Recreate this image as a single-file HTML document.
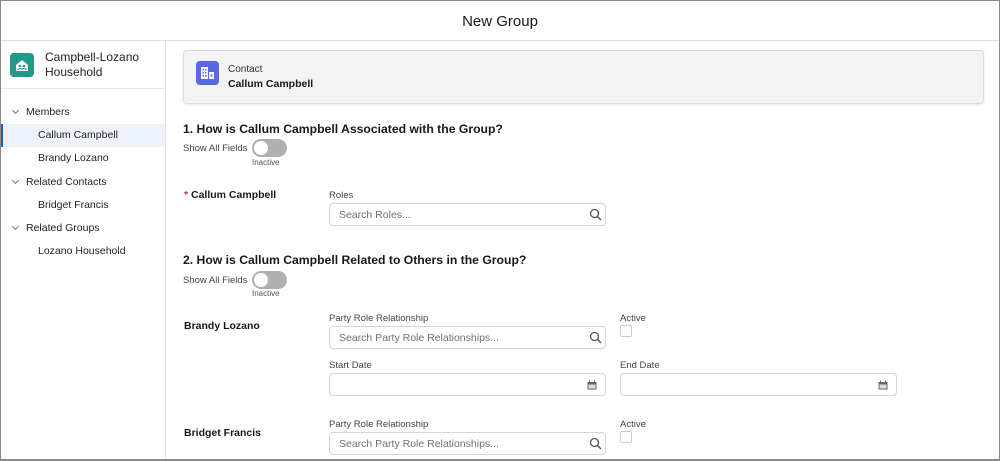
<!DOCTYPE html>
<html><head><meta charset="utf-8"><style>
*{margin:0;padding:0;box-sizing:border-box}
body{width:1000px;height:461px;overflow:hidden;background:#fff;font-family:"Liberation Sans",sans-serif;color:#181818;position:relative}
.a{position:absolute;white-space:nowrap}
.frame{position:absolute;left:0;top:0;width:1000px;height:461px;border:1px solid #8a8a8a;border-bottom:2px solid #8a8a8a;pointer-events:none}
.lbl{font-size:9.5px;color:#444}
.inp{position:absolute;height:23px;border:1px solid #d5d5d5;border-radius:4px;background:#fff;font-size:10.5px;color:#707070;padding:5px 0 0 9px}
.nav{font-size:10.5px;color:#222}
.chev{position:absolute;width:5px;height:5px;border-right:1px solid #777;border-bottom:1px solid #777;transform:rotate(45deg)}
.tog{position:absolute;width:35px;height:18px;border-radius:9px;background:#b0b0b0}
.tog::after{content:"";position:absolute;left:2px;top:2px;width:14px;height:14px;border-radius:50%;background:#fff}
.cb{position:absolute;width:12px;height:12px;border:1px solid #ccc;border-radius:2px}
.b{font-weight:bold;font-size:10.5px}
.h{font-size:12.2px;font-weight:bold}
</style></head><body>
<div class="a" style="left:0;top:13px;width:1000px;text-align:center;font-size:15px">New Group</div>
<div class="a" style="left:0;top:40px;width:1000px;height:1px;background:#ddd"></div>
<div class="a" style="left:165px;top:41px;width:1px;height:420px;background:#e3e3e3"></div>
<div class="a" style="left:10px;top:53px;width:24px;height:24px;border-radius:4px;background:#1d9a8a"></div>
<svg class="a" style="left:14px;top:57px" width="16" height="16" viewBox="0 0 16 16"><path d="M2 8L8 3l6 5v6H2z" fill="#fff"/><circle cx="6" cy="9" r="1.3" fill="#1d9a8a"/><circle cx="10" cy="9" r="1.3" fill="#1d9a8a"/><path d="M4 13c0-2 4-2 4 0M8 13c0-2 4-2 4 0" stroke="#1d9a8a" fill="none"/></svg>
<div class="a" style="left:45px;top:50px;font-size:12px;line-height:15px;color:#222">Campbell-Lozano<br>Household</div>
<div class="a" style="left:0;top:88px;width:165px;height:1px;background:#e5e5e5"></div>
<div class="chev" style="left:13px;top:108px"></div><div class="a nav" style="left:26px;top:106px">Members</div>
<div class="a" style="left:1px;top:124px;width:164px;height:23px;background:#eef3fb;border-left:2px solid #1b5cc8"></div>
<div class="a nav" style="left:38px;top:129px">Callum Campbell</div>
<div class="a nav" style="left:38px;top:152px">Brandy Lozano</div>
<div class="chev" style="left:13px;top:178px"></div><div class="a nav" style="left:26px;top:176px">Related Contacts</div>
<div class="a nav" style="left:38px;top:199px">Bridget Francis</div>
<div class="chev" style="left:13px;top:224px"></div><div class="a nav" style="left:26px;top:222px">Related Groups</div>
<div class="a nav" style="left:38px;top:245px">Lozano Household</div>

<div class="a" style="left:183px;top:50px;width:801px;height:54px;background:#f3f3f3;border:1px solid #dcdcdc;border-radius:4px;box-shadow:0 1px 2px rgba(0,0,0,.1)"></div>
<div class="a" style="left:196px;top:61px;width:23px;height:24px;border-radius:4px;background:#5a67e0"></div>
<svg class="a" style="left:199px;top:65px" width="17" height="16" viewBox="0 0 17 16"><rect x="2" y="2" width="7" height="12" fill="#fff"/><rect x="10" y="7" width="5" height="7" fill="#fff"/><g fill="#5a67e0"><rect x="3.5" y="4" width="1.5" height="1.5"/><rect x="6" y="4" width="1.5" height="1.5"/><rect x="3.5" y="7" width="1.5" height="1.5"/><rect x="6" y="7" width="1.5" height="1.5"/><rect x="3.5" y="10" width="1.5" height="1.5"/><rect x="6" y="10" width="1.5" height="1.5"/><rect x="11.5" y="9.5" width="2" height="2"/></g></svg>
<div class="a" style="left:228px;top:64px;font-size:10px;color:#333">Contact</div>
<div class="a b" style="left:228px;top:78px">Callum Campbell</div>

<div class="a h" style="left:183px;top:122px">1. How is Callum Campbell Associated with the Group?</div>
<div class="a lbl" style="left:183px;top:143px">Show All Fields</div>
<div class="tog" style="left:252px;top:139px"></div>
<div class="a" style="left:252px;top:158px;font-size:8px;color:#555">Inactive</div>
<div class="a b" style="left:184px;top:189px"><span style="color:#c23934">*</span> Callum Campbell</div>
<div class="a lbl" style="left:329px;top:190px">Roles</div>
<div class="inp" style="left:329px;top:203px;width:277px">Search Roles...</div>

<div class="a h" style="left:183px;top:253px">2. How is Callum Campbell Related to Others in the Group?</div>
<div class="a lbl" style="left:183px;top:275px">Show All Fields</div>
<div class="tog" style="left:252px;top:271px"></div>
<div class="a" style="left:252px;top:289px;font-size:8px;color:#555">Inactive</div>

<div class="a b" style="left:184px;top:320px">Brandy Lozano</div>
<div class="a lbl" style="left:329px;top:313px">Party Role Relationship</div>
<div class="inp" style="left:329px;top:326px;width:277px">Search Party Role Relationships...</div>
<div class="a lbl" style="left:620px;top:313px">Active</div>
<div class="cb" style="left:620px;top:325px"></div>
<div class="a lbl" style="left:329px;top:360px">Start Date</div>
<div class="inp" style="left:329px;top:373px;width:277px"></div>
<div class="a lbl" style="left:620px;top:360px">End Date</div>
<div class="inp" style="left:620px;top:373px;width:277px"></div>

<div class="a b" style="left:184px;top:427px">Bridget Francis</div>
<div class="a lbl" style="left:329px;top:419px">Party Role Relationship</div>
<div class="inp" style="left:329px;top:432px;width:277px">Search Party Role Relationships...</div>
<div class="a lbl" style="left:620px;top:419px">Active</div>
<div class="cb" style="left:620px;top:431px"></div>

<svg class="a" style="left:589px;top:208px" width="13" height="13" viewBox="0 0 13 13"><circle cx="5.5" cy="5.5" r="4" stroke="#555" stroke-width="1.3" fill="none"/><path d="M8.5 8.5l3.5 3.5" stroke="#555" stroke-width="1.4"/></svg>
<svg class="a" style="left:589px;top:331px" width="13" height="13" viewBox="0 0 13 13"><circle cx="5.5" cy="5.5" r="4" stroke="#555" stroke-width="1.3" fill="none"/><path d="M8.5 8.5l3.5 3.5" stroke="#555" stroke-width="1.4"/></svg>
<svg class="a" style="left:589px;top:437px" width="13" height="13" viewBox="0 0 13 13"><circle cx="5.5" cy="5.5" r="4" stroke="#555" stroke-width="1.3" fill="none"/><path d="M8.5 8.5l3.5 3.5" stroke="#555" stroke-width="1.4"/></svg>
<svg class="a" style="left:587px;top:380px" width="10" height="10" viewBox="0 0 10 10"><rect x="0.5" y="2" width="9" height="7.5" fill="#666"/><rect x="2" y="0.5" width="1" height="2" fill="#666"/><rect x="7" y="0.5" width="1" height="2" fill="#666"/><rect x="1.5" y="4.5" width="7" height="4" fill="#ddd"/></svg>
<svg class="a" style="left:878px;top:380px" width="10" height="10" viewBox="0 0 10 10"><rect x="0.5" y="2" width="9" height="7.5" fill="#666"/><rect x="2" y="0.5" width="1" height="2" fill="#666"/><rect x="7" y="0.5" width="1" height="2" fill="#666"/><rect x="1.5" y="4.5" width="7" height="4" fill="#ddd"/></svg>
<div class="frame"></div>
</body></html>
